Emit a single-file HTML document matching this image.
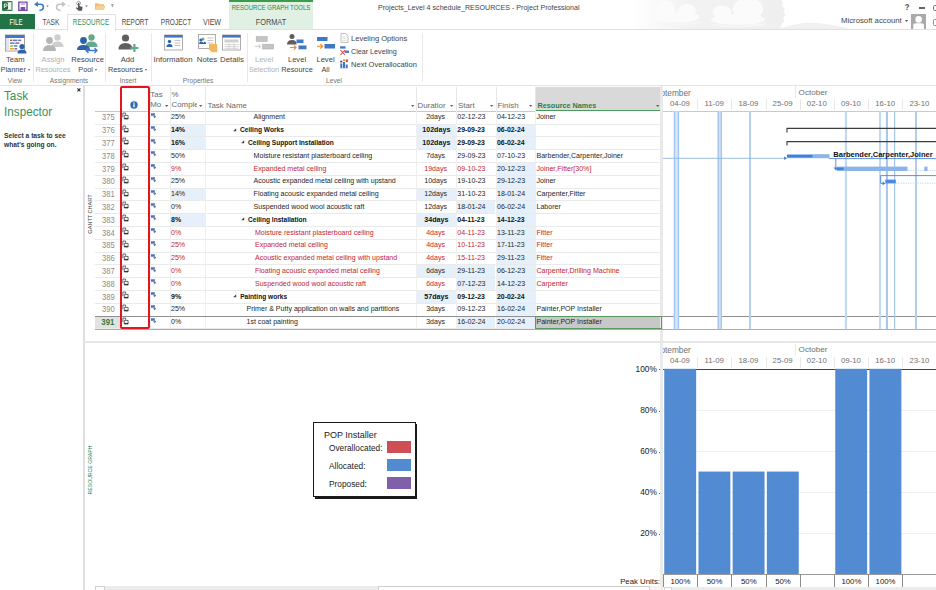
<!DOCTYPE html>
<html><head><meta charset="utf-8"><title>Project Professional</title>
<style>
html,body{margin:0;padding:0;background:#fff;}
html{overflow:hidden;width:936px;height:590px;}
body{width:936px;height:590px;position:relative;overflow:hidden;font-family:"Liberation Sans", sans-serif;}
div,span{box-sizing:border-box;}
svg{position:absolute;overflow:visible;}
</style></head><body>
<svg style="left:620px;top:0;" width="316" height="29.5" viewBox="620 0 316 29.5">
<defs><linearGradient id="cg" x1="0" x2="1" y1="0" y2="0"><stop offset="0" stop-color="#ffffff"/><stop offset="0.38" stop-color="#f2f2f2"/><stop offset="1" stop-color="#efefef"/></linearGradient></defs>
<path d="M630 0H781Q784 3 782 6Q787 9 783 12Q788 15 783 18Q786 22 781 24Q783 27 779 29.5H630Z" fill="url(#cg)"/>
<path d="M779 29.5Q800 20 825 24Q840 26 852 29.5Z" fill="#f0f0f0"/>
<g fill="#fbfbfb">
<ellipse cx="665" cy="9" rx="10" ry="8.5"/><ellipse cx="687" cy="10.5" rx="9" ry="6.5"/><ellipse cx="677" cy="17" rx="22.5" ry="5.5"/>
<ellipse cx="722" cy="12" rx="9.5" ry="6.5"/><ellipse cx="748" cy="9" rx="15" ry="11"/><ellipse cx="738" cy="19.5" rx="27" ry="5.5"/>
</g>
<path d="M655 23Q677 27 700 22M712 25Q738 29 766 24" stroke="#f6f6f6" stroke-width="2" fill="none"/>
</svg>
<div style="position:absolute;left:229.00px;top:0.00px;width:84.00px;height:29.30px;background:#e0f0e3;"></div>
<div style="position:absolute;left:229.00px;top:0.00px;width:84.00px;height:2.00px;background:#3c9c4a;"></div>
<div style="position:absolute;top:1.80px;height:12px;line-height:12px;font-size:7.0px;color:#2a8a43;font-weight:400;white-space:nowrap;left:171.10px;width:200px;text-align:center;transform:scaleX(0.855);transform-origin:center center;">RESOURCE GRAPH TOOLS</div>
<div style="position:absolute;top:16.40px;height:12px;line-height:12px;font-size:8.4px;color:#4a4a4a;font-weight:400;white-space:nowrap;left:171.00px;width:200px;text-align:center;transform:scaleX(0.875);transform-origin:center center;">FORMAT</div>
<svg style="left:0;top:0" width="120" height="14" viewBox="0 0 120 14">
<!-- project icon -->
<rect x="2" y="1" width="10.5" height="10" rx="1" fill="#2e7d46"/>
<rect x="7.2" y="2.2" width="4.3" height="7.6" fill="#e9f4ec"/>
<rect x="3" y="3" width="5" height="6" fill="#1f6a38"/>
<path d="M4.3 8 V4 H6 Q7.2 4 7.2 5.2 Q7.2 6.3 6 6.3 H4.6" stroke="#fff" stroke-width="0.9" fill="none"/>
<!-- save -->
<rect x="18.8" y="2.2" width="8.2" height="8.2" fill="#fff" stroke="#7a4fa3" stroke-width="1.4"/>
<rect x="20.6" y="7" width="4.6" height="3" fill="#7a4fa3"/>
<rect x="20.7" y="2.5" width="4.4" height="2.4" fill="#c8b4dd"/>
<!-- undo -->
<path d="M36.5 4.2 H40.5 Q43.4 4.2 43.4 7 Q43.4 10.2 39.5 10.4" stroke="#3f78c9" stroke-width="1.6" fill="none"/>
<path d="M34 4.3 L38 1.6 V7 Z" fill="#3f78c9"/>
<path d="M46.3 5.4 h2.4 l-1.2 1.5z" fill="#666"/>
<!-- redo -->
<path d="M63 4.2 H59.5 Q56.6 4.2 56.6 7 Q56.6 10.2 60.5 10.4" stroke="#c4c4c4" stroke-width="1.6" fill="none"/>
<path d="M66 4.3 L62 1.6 V7 Z" fill="#c4c4c4"/>
<path d="M67.6 5.4 h2.2 l-1.1 1.4z" fill="#bbb"/>
<!-- touch -->
<circle cx="78.6" cy="3.3" r="1.9" fill="none" stroke="#6d8bb5" stroke-width="0.8"/>
<path d="M78 3 V8 L76 7.2 L76.2 8.6 L78.6 10.8 H82 L82.6 7 L79.4 6 V3 Z" fill="#555"/>
<path d="M85.3 5.4 h2.4 l-1.2 1.5z" fill="#555"/>
<!-- folder -->
<path d="M95 3.2 H98.5 L99.5 4.3 H104 V10 H95 Z" fill="#f0bd76"/>
<path d="M96.6 5.8 H105.6 L104 10 H95 Z" fill="#f5cf98"/>
<path d="M111.2 5.6 h2.4 l-1.2 1.5z" fill="#777"/>
<rect x="111.2" y="4" width="2.4" height="0.7" fill="#777"/>
</svg>
<div style="position:absolute;top:2.10px;height:12px;line-height:12px;font-size:7.12px;color:#444;font-weight:400;white-space:nowrap;left:378.00px;">Projects_Level 4 schedule_RESOURCES - Project Professional</div>
<div style="position:absolute;top:0.80px;height:12px;line-height:12px;font-size:8.6px;color:#4a4a4a;font-weight:700;white-space:nowrap;left:806.90px;width:200px;text-align:center;transform:scaleX(0.9);transform-origin:center center;">?</div>
<div style="position:absolute;left:918.90px;top:6.90px;width:6.30px;height:1.70px;background:#646464;"></div>
<div style="position:absolute;left:933.30px;top:4.60px;width:6.00px;height:6.20px;background:transparent;border:1.2px solid #707070;border-radius:1.6px;"></div>
<div style="position:absolute;top:15.40px;height:12px;line-height:12px;font-size:7.75px;color:#444;font-weight:400;white-space:nowrap;left:841.00px;">Microsoft account</div>
<svg style="left:904.6px;top:20.4px" width="4" height="3"><path d="M0 0h3.2l-1.6 2z" fill="#555"/></svg>
<div style="position:absolute;left:910.80px;top:14.00px;width:15.30px;height:15.40px;background:#a9a9a9;"></div>
<svg style="left:910.8px;top:14px" width="15.3" height="15.4" viewBox="0 0 15.3 15.4">
<circle cx="7.6" cy="5.4" r="3.3" fill="#fff"/><path d="M2.2 15.4V11.6Q2.2 9.2 5.2 9.2H10Q13 9.2 13 11.6V15.4Z" fill="#fff"/></svg>
<div style="position:absolute;left:933.30px;top:19.40px;width:6.00px;height:6.60px;background:transparent;border:1.2px solid #8a8a8a;border-radius:1.6px;"></div>
<div style="position:absolute;left:0.00px;top:14.20px;width:35.40px;height:15.50px;background:#227447;"></div>
<div style="position:absolute;top:16.10px;height:12px;line-height:12px;font-size:8.4px;color:#fff;font-weight:400;white-space:nowrap;left:-83.70px;width:200px;text-align:center;transform:scaleX(0.733);transform-origin:center center;">FILE</div>
<div style="position:absolute;top:16.10px;height:12px;line-height:12px;font-size:8.4px;color:#4a4a4a;font-weight:400;white-space:nowrap;left:-48.60px;width:200px;text-align:center;transform:scaleX(0.788);transform-origin:center center;">TASK</div>
<div style="position:absolute;left:67.00px;top:14.00px;width:48.50px;height:16.50px;background:#fff;border:1px solid #e2e2e2;border-bottom:none;"></div>
<div style="position:absolute;top:16.10px;height:12px;line-height:12px;font-size:8.4px;color:#3a9055;font-weight:400;white-space:nowrap;left:-9.20px;width:200px;text-align:center;transform:scaleX(0.765);transform-origin:center center;">RESOURCE</div>
<div style="position:absolute;top:16.10px;height:12px;line-height:12px;font-size:8.4px;color:#4a4a4a;font-weight:400;white-space:nowrap;left:35.00px;width:200px;text-align:center;transform:scaleX(0.766);transform-origin:center center;">REPORT</div>
<div style="position:absolute;top:16.10px;height:12px;line-height:12px;font-size:8.4px;color:#4a4a4a;font-weight:400;white-space:nowrap;left:76.00px;width:200px;text-align:center;transform:scaleX(0.778);transform-origin:center center;">PROJECT</div>
<div style="position:absolute;top:16.10px;height:12px;line-height:12px;font-size:8.4px;color:#4a4a4a;font-weight:400;white-space:nowrap;left:112.10px;width:200px;text-align:center;transform:scaleX(0.848);transform-origin:center center;">VIEW</div>
<div style="position:absolute;left:0.00px;top:29.30px;width:67.00px;height:1.00px;background:#e0e0e0;"></div>
<div style="position:absolute;left:115.50px;top:29.30px;width:821.00px;height:1.00px;background:#e0e0e0;"></div>
<div style="position:absolute;left:0.00px;top:84.60px;width:936.00px;height:1.00px;background:#e4e4e4;"></div>
<div style="position:absolute;top:54.20px;height:12px;line-height:12px;font-size:7.6px;color:#444;font-weight:400;white-space:nowrap;left:-84.80px;width:200px;text-align:center;">Team</div>
<div style="position:absolute;top:63.70px;height:12px;line-height:12px;font-size:7.35px;color:#444;font-weight:400;white-space:nowrap;left:-84.80px;width:200px;text-align:center;">Planner<span style="display:inline-block;width:0;height:0;border-left:1.5px solid transparent;border-right:1.5px solid transparent;border-top:2px solid #666;margin-left:2px;vertical-align:1px"></span></div>
<div style="position:absolute;top:75.20px;height:12px;line-height:12px;font-size:6.7px;color:#777;font-weight:400;white-space:nowrap;left:-85.00px;width:200px;text-align:center;">View</div>
<div style="position:absolute;left:33.00px;top:33.00px;width:1.00px;height:49.00px;background:#e9e9e9;"></div>
<div style="position:absolute;top:54.20px;height:12px;line-height:12px;font-size:7.6px;color:#b0b0b0;font-weight:400;white-space:nowrap;left:-47.00px;width:200px;text-align:center;">Assign</div>
<div style="position:absolute;top:63.70px;height:12px;line-height:12px;font-size:7.35px;color:#b0b0b0;font-weight:400;white-space:nowrap;left:-47.00px;width:200px;text-align:center;">Resources</div>
<div style="position:absolute;top:54.20px;height:12px;line-height:12px;font-size:7.6px;color:#444;font-weight:400;white-space:nowrap;left:-12.40px;width:200px;text-align:center;">Resource</div>
<div style="position:absolute;top:63.70px;height:12px;line-height:12px;font-size:7.35px;color:#444;font-weight:400;white-space:nowrap;left:-12.40px;width:200px;text-align:center;">Pool<span style="display:inline-block;width:0;height:0;border-left:1.5px solid transparent;border-right:1.5px solid transparent;border-top:2px solid #666;margin-left:2px;vertical-align:1px"></span></div>
<div style="position:absolute;top:75.20px;height:12px;line-height:12px;font-size:6.7px;color:#777;font-weight:400;white-space:nowrap;left:-31.00px;width:200px;text-align:center;">Assignments</div>
<div style="position:absolute;left:104.70px;top:33.00px;width:1.00px;height:49.00px;background:#e9e9e9;"></div>
<div style="position:absolute;top:54.20px;height:12px;line-height:12px;font-size:7.6px;color:#444;font-weight:400;white-space:nowrap;left:27.50px;width:200px;text-align:center;">Add</div>
<div style="position:absolute;top:63.70px;height:12px;line-height:12px;font-size:7.35px;color:#444;font-weight:400;white-space:nowrap;left:27.50px;width:200px;text-align:center;">Resources<span style="display:inline-block;width:0;height:0;border-left:1.5px solid transparent;border-right:1.5px solid transparent;border-top:2px solid #666;margin-left:2px;vertical-align:1px"></span></div>
<div style="position:absolute;top:75.20px;height:12px;line-height:12px;font-size:6.7px;color:#777;font-weight:400;white-space:nowrap;left:28.00px;width:200px;text-align:center;">Insert</div>
<div style="position:absolute;left:150.50px;top:33.00px;width:1.00px;height:49.00px;background:#e9e9e9;"></div>
<div style="position:absolute;top:54.20px;height:12px;line-height:12px;font-size:7.8px;color:#444;font-weight:400;white-space:nowrap;left:73.00px;width:200px;text-align:center;">Information</div>
<div style="position:absolute;top:54.20px;height:12px;line-height:12px;font-size:7.8px;color:#444;font-weight:400;white-space:nowrap;left:107.00px;width:200px;text-align:center;">Notes</div>
<div style="position:absolute;top:54.20px;height:12px;line-height:12px;font-size:7.8px;color:#444;font-weight:400;white-space:nowrap;left:132.00px;width:200px;text-align:center;">Details</div>
<div style="position:absolute;top:75.20px;height:12px;line-height:12px;font-size:6.7px;color:#777;font-weight:400;white-space:nowrap;left:98.00px;width:200px;text-align:center;">Properties</div>
<div style="position:absolute;left:246.50px;top:33.00px;width:1.00px;height:49.00px;background:#e9e9e9;"></div>
<div style="position:absolute;top:54.20px;height:12px;line-height:12px;font-size:7.6px;color:#b0b0b0;font-weight:400;white-space:nowrap;left:164.00px;width:200px;text-align:center;">Level</div>
<div style="position:absolute;top:63.70px;height:12px;line-height:12px;font-size:7.35px;color:#b0b0b0;font-weight:400;white-space:nowrap;left:164.00px;width:200px;text-align:center;">Selection</div>
<div style="position:absolute;top:54.20px;height:12px;line-height:12px;font-size:7.6px;color:#444;font-weight:400;white-space:nowrap;left:197.00px;width:200px;text-align:center;">Level</div>
<div style="position:absolute;top:63.70px;height:12px;line-height:12px;font-size:7.35px;color:#444;font-weight:400;white-space:nowrap;left:197.00px;width:200px;text-align:center;">Resource</div>
<div style="position:absolute;top:54.20px;height:12px;line-height:12px;font-size:7.6px;color:#444;font-weight:400;white-space:nowrap;left:225.50px;width:200px;text-align:center;">Level</div>
<div style="position:absolute;top:63.70px;height:12px;line-height:12px;font-size:7.35px;color:#444;font-weight:400;white-space:nowrap;left:225.50px;width:200px;text-align:center;">All</div>
<div style="position:absolute;top:32.50px;height:12px;line-height:12px;font-size:7.55px;color:#444;font-weight:400;white-space:nowrap;left:351.00px;">Leveling Options</div>
<div style="position:absolute;top:45.90px;height:12px;line-height:12px;font-size:7.55px;color:#444;font-weight:400;white-space:nowrap;left:351.00px;transform:scaleX(0.95);transform-origin:left center;">Clear Leveling</div>
<div style="position:absolute;top:59.10px;height:12px;line-height:12px;font-size:7.55px;color:#444;font-weight:400;white-space:nowrap;left:351.00px;">Next Overallocation</div>
<div style="position:absolute;top:75.20px;height:12px;line-height:12px;font-size:6.7px;color:#777;font-weight:400;white-space:nowrap;left:234.00px;width:200px;text-align:center;">Level</div>
<div style="position:absolute;left:421.50px;top:33.00px;width:1.00px;height:49.00px;background:#e9e9e9;"></div>
<svg style="left:0;top:30px" width="430" height="40" viewBox="0 30 430 40">
<!-- Team planner -->
<rect x="5.5" y="35" width="19" height="16" fill="#fff" stroke="#8a8a8a" stroke-width="0.8"/>
<rect x="5.5" y="35" width="19" height="3" fill="#3f78c9"/>
<rect x="5.9" y="38" width="3.2" height="12.6" fill="#dfe3ea"/>
<rect x="10" y="39.6" width="2.4" height="1.5" fill="#c0504d"/><rect x="13" y="39.6" width="4.4" height="1.5" fill="#4f81bd"/><rect x="18.2" y="39.6" width="3" height="1.5" fill="#8064a2"/>
<rect x="10" y="42.4" width="4.5" height="1.5" fill="#4f81bd"/><rect x="15.3" y="42.4" width="4" height="1.5" fill="#8064a2"/>
<rect x="10" y="45.2" width="3.4" height="1.5" fill="#9bbb59"/><rect x="14" y="45.2" width="3.4" height="1.5" fill="#4f81bd"/>
<rect x="10" y="48" width="4" height="1.5" fill="#f0a030"/><rect x="14.6" y="48" width="2.6" height="1.5" fill="#8064a2"/>
<circle cx="22" cy="46.5" r="2.6" fill="#2d63ad"/><path d="M17.5 53.5 Q17.5 49.5 22 49.5 Q26.5 49.5 26.5 53.5 Z" fill="#2d63ad"/>
<!-- Assign resources (gray) -->
<circle cx="57.5" cy="37.5" r="3.2" fill="#cfcfcf"/><path d="M51.5 47 Q51.5 41.5 57.5 41.5 Q63.5 41.5 63.5 47 Z" fill="#cfcfcf"/>
<circle cx="49.5" cy="40.5" r="3.4" fill="#b5b5b5"/><path d="M43 51 Q43 45 49.5 45 Q56 45 56 51 Z" fill="#b5b5b5"/>
<!-- Resource pool -->
<circle cx="91.5" cy="37.5" r="3.2" fill="#6aa88c"/><path d="M85.5 47 Q85.5 41.5 91.5 41.5 Q97.5 41.5 97.5 47 Z" fill="#6aa88c"/>
<circle cx="83.5" cy="40.5" r="3.4" fill="#2d63ad"/><path d="M77 50 Q77 45 83.5 45 Q90 45 90 50 Z" fill="#2d63ad"/>
<path d="M86 50.5 H97 M88.5 48 L86 50.5 L88.5 53 M94.5 48 L97 50.5 L94.5 53" stroke="#3f78c9" stroke-width="1.3" fill="none"/>
<!-- Add resources -->
<circle cx="125.5" cy="38" r="3.6" fill="#5f5f5f"/><path d="M118.5 49.5 Q118.5 43 125.5 43 Q132.5 43 132.5 49.5 Z" fill="#5f5f5f"/>
<path d="M134.4 44 V52 M130.4 48 H138.4" stroke="#5aad8a" stroke-width="2.2"/>
<!-- Information -->
<rect x="164.5" y="35" width="18" height="15" fill="#fff" stroke="#9a9a9a" stroke-width="0.8"/>
<rect x="164.5" y="35" width="18" height="2.6" fill="#3f78c9"/>
<circle cx="169.5" cy="41.5" r="1.7" fill="#2d63ad"/><path d="M166.5 47 Q166.5 44 169.5 44 Q172.5 44 172.5 47 Z" fill="#2d63ad"/>
<path d="M174.5 40.5 H180.5 M174.5 43 H180.5 M174.5 45.5 H180.5" stroke="#bdbdbd" stroke-width="0.9"/>
<!-- Notes -->
<rect x="198.5" y="34.5" width="17" height="14" fill="#fff" stroke="#9a9a9a" stroke-width="0.8"/>
<circle cx="203" cy="39" r="1.5" fill="#6aa88c"/><circle cx="200.8" cy="40" r="1.5" fill="#2d63ad"/>
<path d="M199 44 Q199 41.7 201 41.7 Q203 41.7 203.5 43 Q204.5 41 206 42.5 V44 Z" fill="#2d63ad"/>
<path d="M207.5 38 H213.5 M207.5 40.5 H213.5 M207.5 43 H213.5" stroke="#bdbdbd" stroke-width="0.9"/>
<rect x="209" y="44" width="8.2" height="8.2" fill="#f0b860"/>
<path d="M209 49.5 L211.8 52.2 H209 Z" fill="#fff"/>
<!-- Details -->
<rect x="222.5" y="35" width="18" height="15" fill="#fff" stroke="#9a9a9a" stroke-width="0.8"/>
<rect x="222.5" y="35" width="18" height="2.6" fill="#3f78c9"/>
<rect x="224.5" y="39.5" width="14" height="3" fill="#d0d0d0"/>
<path d="M224.5 44.5 H238.5 M224.5 46.5 H238.5 M224.5 48.3 H238.5 M229 43.5 V49 M234 43.5 V49" stroke="#c4c4c4" stroke-width="0.7"/>
<!-- Level selection (gray) -->
<rect x="256.2" y="36.6" width="11" height="4.8" fill="#c4c4c4" stroke="#b0b0b0" stroke-width="0.6"/>
<rect x="262.6" y="44.2" width="11" height="4.8" fill="#c4c4c4" stroke="#b0b0b0" stroke-width="0.6"/>
<path d="M255 46.3 H260.5 M258.5 44.3 L260.7 46.3 L258.5 48.3" stroke="#c9c9c9" stroke-width="1" fill="none"/>
<!-- Level resource -->
<circle cx="292" cy="36.6" r="2.5" fill="#5f5f5f"/><path d="M287 44.5 Q287 40 292 40 Q297 40 296.5 44.5 Z" fill="#5f5f5f"/>
<rect x="296.5" y="39.5" width="7" height="3.6" fill="#3f78c9"/>
<rect x="298.5" y="45.5" width="8" height="3.8" fill="#3f78c9"/>
<path d="M290 47.5 H296 M293.8 45.3 L296.2 47.5 L293.8 49.7" stroke="#f08a24" stroke-width="1.1" fill="none"/>
<!-- Level all -->
<rect x="317" y="37" width="10.5" height="4" fill="#3f78c9"/>
<rect x="324.5" y="44" width="10.5" height="4.5" fill="#3f78c9"/>
<path d="M317 46.3 H322.5 M320.3 44.1 L322.7 46.3 L320.3 48.5" stroke="#f08a24" stroke-width="1.1" fill="none"/>
<!-- Leveling options -->
<path d="M341 33.5 H345.5 L348 36 V42.5 H341 Z" fill="#fff" stroke="#a6a6a6" stroke-width="0.7"/>
<path d="M342.3 37 H346.5 M342.3 38.8 H346.5 M342.3 40.6 H346.5" stroke="#cfcfcf" stroke-width="0.6"/>
<!-- Clear leveling -->
<rect x="340" y="46.3" width="5.5" height="2.3" fill="#3f78c9"/><rect x="344.5" y="50.6" width="4.5" height="2.3" fill="#3f78c9"/>
<path d="M340.5 50 L345 55 M345 50 L340.5 55" stroke="#e0463b" stroke-width="1.1"/>
<!-- Next overallocation -->
<rect x="340.3" y="63.5" width="2" height="4.8" fill="#3f78c9"/><rect x="343" y="62" width="2" height="6.3" fill="#3f78c9"/><rect x="345.7" y="64.5" width="2" height="3.8" fill="#3f78c9"/>
<rect x="340.3" y="60.7" width="2" height="1.8" fill="#444"/><rect x="345.7" y="59.5" width="2.2" height="2.6" fill="#e0463b"/><rect x="343" y="59.3" width="2" height="1.6" fill="#f08a24"/>
</svg>
<div style="position:absolute;top:89.50px;height:12px;line-height:12px;font-size:12.5px;color:#3a9055;font-weight:400;white-space:nowrap;height:20px;line-height:20px;margin-top:-4px;left:4.40px;transform:scaleX(0.938);transform-origin:left center;">Task</div>
<div style="position:absolute;top:105.70px;height:12px;line-height:12px;font-size:12.5px;color:#3a9055;font-weight:400;white-space:nowrap;height:20px;line-height:20px;margin-top:-4px;left:4.40px;transform:scaleX(0.938);transform-origin:left center;">Inspector</div>
<div style="position:absolute;top:130.20px;height:12px;line-height:12px;font-size:6.7px;color:#333;font-weight:700;white-space:nowrap;left:4.00px;">Select a task to see</div>
<div style="position:absolute;top:139.20px;height:12px;line-height:12px;font-size:6.7px;color:#333;font-weight:700;white-space:nowrap;left:4.00px;">what's going on.</div>
<svg style="left:76.8px;top:88.2px" width="5" height="5"><path d="M0.4 0.4L3.4 3.4M3.4 0.4L0.4 3.4" stroke="#3a3a3a" stroke-width="1.1"/></svg>
<div style="position:absolute;left:83.10px;top:85.00px;width:1.50px;height:505.00px;background:#dedede;"></div>
<div style="position:absolute;left:39.6px;top:208.6px;width:100px;height:10px;line-height:10px;text-align:center;font-size:5.55px;color:#454545;transform:rotate(-90deg);white-space:nowrap;">GANTT CHART</div>
<div style="position:absolute;left:39.7px;top:465px;width:100px;height:10px;line-height:10px;text-align:center;font-size:5.15px;color:#1f7a3f;transform:rotate(-90deg);white-space:nowrap;">RESOURCE GRAPH</div>
<div style="position:absolute;left:535.00px;top:86.50px;width:126.00px;height:24.80px;background:#d9d9d9;"></div>
<div style="position:absolute;left:535.00px;top:109.60px;width:126.00px;height:1.70px;background:#4a9c5b;"></div>
<div style="position:absolute;left:94.80px;top:110.60px;width:440.20px;height:1.00px;background:#c8c8c8;"></div>
<div style="position:absolute;left:149.50px;top:87.00px;width:1.00px;height:24.00px;background:#e6e6e6;"></div>
<div style="position:absolute;left:169.50px;top:87.00px;width:1.00px;height:24.00px;background:#e6e6e6;"></div>
<div style="position:absolute;left:205.30px;top:87.00px;width:1.00px;height:24.00px;background:#e6e6e6;"></div>
<div style="position:absolute;left:415.50px;top:87.00px;width:1.00px;height:24.00px;background:#e6e6e6;"></div>
<div style="position:absolute;left:455.80px;top:87.00px;width:1.00px;height:24.00px;background:#e6e6e6;"></div>
<div style="position:absolute;left:495.50px;top:87.00px;width:1.00px;height:24.00px;background:#e6e6e6;"></div>
<div style="position:absolute;left:535.00px;top:87.00px;width:1.00px;height:24.00px;background:#e6e6e6;"></div>
<div style="position:absolute;top:89.20px;height:12px;line-height:12px;font-size:7.9px;color:#6a6a6a;font-weight:400;white-space:nowrap;left:150.30px;">Tas</div>
<div style="position:absolute;top:99.20px;height:12px;line-height:12px;font-size:7.9px;color:#6a6a6a;font-weight:400;white-space:nowrap;left:150.30px;">Mo</div>
<div style="position:absolute;left:163.50px;top:90.00px;width:6.00px;height:21.00px;background:#fff;"></div>
<div style="position:absolute;top:89.20px;height:12px;line-height:12px;font-size:7.9px;color:#6a6a6a;font-weight:400;white-space:nowrap;left:171.50px;">%</div>
<div style="position:absolute;top:99.20px;height:12px;line-height:12px;font-size:7.9px;color:#6a6a6a;font-weight:400;white-space:nowrap;left:171.50px;">Comple</div>
<div style="position:absolute;left:197.20px;top:99.00px;width:8.00px;height:12.00px;background:#fff;"></div>
<div style="position:absolute;top:99.90px;height:12px;line-height:12px;font-size:7.9px;color:#6a6a6a;font-weight:400;white-space:nowrap;left:207.50px;">Task Name</div>
<div style="position:absolute;top:99.90px;height:12px;line-height:12px;font-size:7.9px;color:#6a6a6a;font-weight:400;white-space:nowrap;left:417.50px;">Duratior</div>
<div style="position:absolute;left:448.00px;top:99.00px;width:7.50px;height:11.50px;background:#fff;"></div>
<div style="position:absolute;top:99.90px;height:12px;line-height:12px;font-size:7.9px;color:#6a6a6a;font-weight:400;white-space:nowrap;left:458.00px;">Start</div>
<div style="position:absolute;top:99.90px;height:12px;line-height:12px;font-size:7.9px;color:#6a6a6a;font-weight:400;white-space:nowrap;left:497.50px;">Finish</div>
<div style="position:absolute;top:99.90px;height:12px;line-height:12px;font-size:7.25px;color:#2f7d45;font-weight:700;white-space:nowrap;left:537.50px;">Resource Names</div>
<svg style="left:164.5px;top:105.2px" width="4" height="3"><path d="M0 0h3.4l-1.7 2.1z" fill="#666"/></svg>
<svg style="left:198.5px;top:105.2px" width="4" height="3"><path d="M0 0h3.4l-1.7 2.1z" fill="#666"/></svg>
<svg style="left:410.5px;top:105.2px" width="4" height="3"><path d="M0 0h3.4l-1.7 2.1z" fill="#666"/></svg>
<svg style="left:449.5px;top:105.2px" width="4" height="3"><path d="M0 0h3.4l-1.7 2.1z" fill="#666"/></svg>
<svg style="left:489.5px;top:105.2px" width="4" height="3"><path d="M0 0h3.4l-1.7 2.1z" fill="#666"/></svg>
<svg style="left:529px;top:105.2px" width="4" height="3"><path d="M0 0h3.4l-1.7 2.1z" fill="#666"/></svg>
<svg style="left:655.5px;top:105.2px" width="4" height="3"><path d="M0 0h3.4l-1.7 2.1z" fill="#2f7d45"/></svg>
<svg style="left:130.3px;top:100.7px" width="8" height="8" viewBox="0 0 8 8"><circle cx="4" cy="4" r="3.7" fill="#2f6db5"/><rect x="3.3" y="3.3" width="1.4" height="2.9" fill="#fff"/><rect x="3.3" y="1.5" width="1.4" height="1.2" fill="#fff"/></svg>
<div style="position:absolute;left:170.50px;top:124.15px;width:34.80px;height:12.30px;background:#e6f0fb;"></div>
<div style="position:absolute;left:416.50px;top:124.15px;width:39.30px;height:12.30px;background:#e6f0fb;"></div>
<div style="position:absolute;left:496.50px;top:124.15px;width:38.50px;height:12.30px;background:#e6f0fb;"></div>
<div style="position:absolute;left:170.50px;top:136.95px;width:34.80px;height:12.30px;background:#e6f0fb;"></div>
<div style="position:absolute;left:416.50px;top:136.95px;width:39.30px;height:12.30px;background:#e6f0fb;"></div>
<div style="position:absolute;left:496.50px;top:136.95px;width:38.50px;height:12.30px;background:#e6f0fb;"></div>
<div style="position:absolute;left:496.50px;top:162.55px;width:38.50px;height:12.30px;background:#e6f0fb;"></div>
<div style="position:absolute;left:496.50px;top:175.35px;width:38.50px;height:12.30px;background:#e6f0fb;"></div>
<div style="position:absolute;left:170.50px;top:188.15px;width:34.80px;height:12.30px;background:#e6f0fb;"></div>
<div style="position:absolute;left:416.50px;top:188.15px;width:39.30px;height:12.30px;background:#e6f0fb;"></div>
<div style="position:absolute;left:496.50px;top:188.15px;width:38.50px;height:12.30px;background:#e6f0fb;"></div>
<div style="position:absolute;left:456.80px;top:200.95px;width:38.70px;height:12.30px;background:#e6f0fb;"></div>
<div style="position:absolute;left:496.50px;top:200.95px;width:38.50px;height:12.30px;background:#e6f0fb;"></div>
<div style="position:absolute;left:170.50px;top:213.75px;width:34.80px;height:12.30px;background:#e6f0fb;"></div>
<div style="position:absolute;left:416.50px;top:213.75px;width:39.30px;height:12.30px;background:#e6f0fb;"></div>
<div style="position:absolute;left:496.50px;top:213.75px;width:38.50px;height:12.30px;background:#e6f0fb;"></div>
<div style="position:absolute;left:496.50px;top:226.55px;width:38.50px;height:12.30px;background:#e6f0fb;"></div>
<div style="position:absolute;left:496.50px;top:239.35px;width:38.50px;height:12.30px;background:#e6f0fb;"></div>
<div style="position:absolute;left:496.50px;top:252.15px;width:38.50px;height:12.30px;background:#e6f0fb;"></div>
<div style="position:absolute;left:416.50px;top:264.95px;width:39.30px;height:12.30px;background:#e6f0fb;"></div>
<div style="position:absolute;left:456.80px;top:264.95px;width:38.70px;height:12.30px;background:#e6f0fb;"></div>
<div style="position:absolute;left:496.50px;top:264.95px;width:38.50px;height:12.30px;background:#e6f0fb;"></div>
<div style="position:absolute;left:456.80px;top:277.75px;width:38.70px;height:12.30px;background:#e6f0fb;"></div>
<div style="position:absolute;left:496.50px;top:277.75px;width:38.50px;height:12.30px;background:#e6f0fb;"></div>
<div style="position:absolute;left:416.50px;top:290.55px;width:39.30px;height:12.30px;background:#e6f0fb;"></div>
<div style="position:absolute;left:496.50px;top:290.55px;width:38.50px;height:12.30px;background:#e6f0fb;"></div>
<div style="position:absolute;left:496.50px;top:303.35px;width:38.50px;height:12.30px;background:#e6f0fb;"></div>
<div style="position:absolute;left:456.80px;top:316.15px;width:38.70px;height:12.30px;background:#e6f0fb;"></div>
<div style="position:absolute;left:496.50px;top:316.15px;width:38.50px;height:12.30px;background:#e6f0fb;"></div>
<div style="position:absolute;left:94.80px;top:315.65px;width:25.60px;height:12.80px;background:#e2e2e2;"></div>
<div style="position:absolute;left:535.00px;top:315.95px;width:126.50px;height:13.00px;background:#c8c8c8;border:1px solid #5a9a62;"></div>
<div style="position:absolute;left:94.80px;top:123.65px;width:566.20px;height:1.00px;background:#eaeaea;"></div>
<div style="position:absolute;left:94.80px;top:136.45px;width:566.20px;height:1.00px;background:#eaeaea;"></div>
<div style="position:absolute;left:94.80px;top:149.25px;width:566.20px;height:1.00px;background:#eaeaea;"></div>
<div style="position:absolute;left:94.80px;top:162.05px;width:566.20px;height:1.00px;background:#eaeaea;"></div>
<div style="position:absolute;left:94.80px;top:174.85px;width:566.20px;height:1.00px;background:#eaeaea;"></div>
<div style="position:absolute;left:94.80px;top:187.65px;width:566.20px;height:1.00px;background:#eaeaea;"></div>
<div style="position:absolute;left:94.80px;top:200.45px;width:566.20px;height:1.00px;background:#eaeaea;"></div>
<div style="position:absolute;left:94.80px;top:213.25px;width:566.20px;height:1.00px;background:#eaeaea;"></div>
<div style="position:absolute;left:94.80px;top:226.05px;width:566.20px;height:1.00px;background:#eaeaea;"></div>
<div style="position:absolute;left:94.80px;top:238.85px;width:566.20px;height:1.00px;background:#eaeaea;"></div>
<div style="position:absolute;left:94.80px;top:251.65px;width:566.20px;height:1.00px;background:#eaeaea;"></div>
<div style="position:absolute;left:94.80px;top:264.45px;width:566.20px;height:1.00px;background:#eaeaea;"></div>
<div style="position:absolute;left:94.80px;top:277.25px;width:566.20px;height:1.00px;background:#eaeaea;"></div>
<div style="position:absolute;left:94.80px;top:290.05px;width:566.20px;height:1.00px;background:#eaeaea;"></div>
<div style="position:absolute;left:94.80px;top:302.85px;width:566.20px;height:1.00px;background:#eaeaea;"></div>
<div style="position:absolute;left:94.80px;top:315.65px;width:566.20px;height:1.00px;background:#eaeaea;"></div>
<div style="position:absolute;left:94.80px;top:328.45px;width:566.20px;height:1.00px;background:#eaeaea;"></div>
<div style="position:absolute;left:120.30px;top:110.85px;width:1.00px;height:217.60px;background:#efefef;"></div>
<div style="position:absolute;left:149.50px;top:110.85px;width:1.00px;height:217.60px;background:#efefef;"></div>
<div style="position:absolute;left:169.50px;top:110.85px;width:1.00px;height:217.60px;background:#efefef;"></div>
<div style="position:absolute;left:205.30px;top:110.85px;width:1.00px;height:217.60px;background:#efefef;"></div>
<div style="position:absolute;left:415.50px;top:110.85px;width:1.00px;height:217.60px;background:#efefef;"></div>
<div style="position:absolute;left:455.80px;top:110.85px;width:1.00px;height:217.60px;background:#efefef;"></div>
<div style="position:absolute;left:495.50px;top:110.85px;width:1.00px;height:217.60px;background:#efefef;"></div>
<div style="position:absolute;left:535.00px;top:110.85px;width:1.00px;height:217.60px;background:#efefef;"></div>
<div style="position:absolute;left:660.40px;top:86.00px;width:2.80px;height:256.00px;background:#e9e9e9;"></div>
<div style="position:absolute;left:94.80px;top:315.85px;width:841.20px;height:1.00px;background:#909090;"></div>
<div style="position:absolute;left:94.80px;top:328.55px;width:841.20px;height:1.20px;background:#adadad;"></div>
<div style="position:absolute;left:535.00px;top:315.95px;width:126.50px;height:13.20px;background:transparent;border:1px solid #5a9a62;"></div>
<div style="position:absolute;top:111.30px;height:12px;line-height:12px;font-size:8.8px;color:#8a8a8a;font-weight:400;white-space:nowrap;right:821.70px;text-align:right;transform:scaleX(0.858);transform-origin:right center;">375</div>
<div style="position:absolute;top:111.30px;height:12px;line-height:12px;font-size:7.05px;color:#262626;font-weight:400;white-space:nowrap;left:171.00px;">25%</div>
<div style="position:absolute;top:111.30px;height:12px;line-height:12px;font-size:7.05px;color:#262626;font-weight:400;white-space:nowrap;left:253.60px;">Alignment</div>
<div style="position:absolute;top:111.30px;height:12px;line-height:12px;font-size:7.05px;color:#262626;font-weight:400;white-space:nowrap;left:335.60px;width:200px;text-align:center;">2days</div>
<div style="position:absolute;top:111.30px;height:12px;line-height:12px;font-size:7.05px;color:#262626;font-weight:400;white-space:nowrap;left:457.30px;">02-12-23</div>
<div style="position:absolute;top:111.30px;height:12px;line-height:12px;font-size:7.05px;color:#262626;font-weight:400;white-space:nowrap;left:497.00px;">04-12-23</div>
<div style="position:absolute;top:111.30px;height:12px;line-height:12px;font-size:7.05px;color:#262626;font-weight:400;white-space:nowrap;left:536.50px;">Joiner</div>
<svg style="left:121.9px;top:111.8px" width="8" height="9" viewBox="0 0 8 9"><path d="M0.9 1H3.6V2.8M0.9 1V5.2M2.3 3.4H6.1V7H2.3Z" fill="none" stroke="#3a3a3a" stroke-width="0.75"/><rect x="2.3" y="5.9" width="3.8" height="1.1" fill="#333"/></svg>
<svg style="left:150.8px;top:113.0px" width="6" height="6" viewBox="0 0 6 6"><path d="M0 0.2H4.1L3.4 2.8H0Z" fill="#3f78c9"/><path d="M2.2 3.6H4M3.4 2.4V4.9L4.9 3.6Z" stroke="#5a6f8f" stroke-width="0.6" fill="#5a6f8f"/></svg>
<div style="position:absolute;top:124.10px;height:12px;line-height:12px;font-size:8.8px;color:#8a8a8a;font-weight:400;white-space:nowrap;right:821.70px;text-align:right;transform:scaleX(0.858);transform-origin:right center;">376</div>
<div style="position:absolute;top:124.10px;height:12px;line-height:12px;font-size:7.05px;color:#111;font-weight:700;white-space:nowrap;left:171.00px;">14%</div>
<svg style="left:233.2px;top:127.6px" width="4" height="4"><path d="M3.2 0.2V3.2H0.2z" fill="#444"/></svg>
<div style="position:absolute;top:124.10px;height:12px;line-height:12px;font-size:6.6px;color:#111;font-weight:700;white-space:nowrap;left:240.00px;">Ceiling Works</div>
<div style="position:absolute;top:124.10px;height:12px;line-height:12px;font-size:7.15px;color:#111;font-weight:700;white-space:nowrap;left:336.30px;width:200px;text-align:center;">102days</div>
<div style="position:absolute;top:124.10px;height:12px;line-height:12px;font-size:6.9px;color:#111;font-weight:700;white-space:nowrap;left:457.30px;">29-09-23</div>
<div style="position:absolute;top:124.10px;height:12px;line-height:12px;font-size:6.9px;color:#111;font-weight:700;white-space:nowrap;left:497.00px;">06-02-24</div>
<div style="position:absolute;top:124.10px;height:12px;line-height:12px;font-size:7.05px;color:#262626;font-weight:400;white-space:nowrap;left:536.50px;"></div>
<svg style="left:121.9px;top:124.5px" width="8" height="9" viewBox="0 0 8 9"><path d="M0.9 1H3.6V2.8M0.9 1V5.2M2.3 3.4H6.1V7H2.3Z" fill="none" stroke="#3a3a3a" stroke-width="0.75"/><rect x="2.3" y="5.9" width="3.8" height="1.1" fill="#333"/></svg>
<svg style="left:150.8px;top:125.8px" width="6" height="6" viewBox="0 0 6 6"><path d="M0 0.2H4.1L3.4 2.8H0Z" fill="#3f78c9"/><path d="M2.2 3.6H4M3.4 2.4V4.9L4.9 3.6Z" stroke="#5a6f8f" stroke-width="0.6" fill="#5a6f8f"/></svg>
<div style="position:absolute;top:136.90px;height:12px;line-height:12px;font-size:8.8px;color:#8a8a8a;font-weight:400;white-space:nowrap;right:821.70px;text-align:right;transform:scaleX(0.858);transform-origin:right center;">377</div>
<div style="position:absolute;top:136.90px;height:12px;line-height:12px;font-size:7.05px;color:#111;font-weight:700;white-space:nowrap;left:171.00px;">16%</div>
<svg style="left:241.2px;top:140.4px" width="4" height="4"><path d="M3.2 0.2V3.2H0.2z" fill="#444"/></svg>
<div style="position:absolute;top:136.90px;height:12px;line-height:12px;font-size:6.6px;color:#111;font-weight:700;white-space:nowrap;left:248.00px;">Ceiling Support Installation</div>
<div style="position:absolute;top:136.90px;height:12px;line-height:12px;font-size:7.15px;color:#111;font-weight:700;white-space:nowrap;left:336.30px;width:200px;text-align:center;">102days</div>
<div style="position:absolute;top:136.90px;height:12px;line-height:12px;font-size:6.9px;color:#111;font-weight:700;white-space:nowrap;left:457.30px;">29-09-23</div>
<div style="position:absolute;top:136.90px;height:12px;line-height:12px;font-size:6.9px;color:#111;font-weight:700;white-space:nowrap;left:497.00px;">06-02-24</div>
<div style="position:absolute;top:136.90px;height:12px;line-height:12px;font-size:7.05px;color:#262626;font-weight:400;white-space:nowrap;left:536.50px;"></div>
<svg style="left:121.9px;top:137.3px" width="8" height="9" viewBox="0 0 8 9"><path d="M0.9 1H3.6V2.8M0.9 1V5.2M2.3 3.4H6.1V7H2.3Z" fill="none" stroke="#3a3a3a" stroke-width="0.75"/><rect x="2.3" y="5.9" width="3.8" height="1.1" fill="#333"/></svg>
<svg style="left:150.8px;top:138.5px" width="6" height="6" viewBox="0 0 6 6"><path d="M0 0.2H4.1L3.4 2.8H0Z" fill="#3f78c9"/><path d="M2.2 3.6H4M3.4 2.4V4.9L4.9 3.6Z" stroke="#5a6f8f" stroke-width="0.6" fill="#5a6f8f"/></svg>
<div style="position:absolute;top:149.70px;height:12px;line-height:12px;font-size:8.8px;color:#8a8a8a;font-weight:400;white-space:nowrap;right:821.70px;text-align:right;transform:scaleX(0.858);transform-origin:right center;">378</div>
<div style="position:absolute;top:149.70px;height:12px;line-height:12px;font-size:7.05px;color:#262626;font-weight:400;white-space:nowrap;left:171.00px;">50%</div>
<div style="position:absolute;top:149.70px;height:12px;line-height:12px;font-size:7.05px;color:#262626;font-weight:400;white-space:nowrap;left:253.60px;">Moisture resistant plasterboard ceiling</div>
<div style="position:absolute;top:149.70px;height:12px;line-height:12px;font-size:7.05px;color:#262626;font-weight:400;white-space:nowrap;left:335.60px;width:200px;text-align:center;">7days</div>
<div style="position:absolute;top:149.70px;height:12px;line-height:12px;font-size:7.05px;color:#262626;font-weight:400;white-space:nowrap;left:457.30px;">29-09-23</div>
<div style="position:absolute;top:149.70px;height:12px;line-height:12px;font-size:7.05px;color:#262626;font-weight:400;white-space:nowrap;left:497.00px;">07-10-23</div>
<div style="position:absolute;top:149.70px;height:12px;line-height:12px;font-size:7.05px;color:#262626;font-weight:400;white-space:nowrap;left:536.50px;">Barbender,Carpenter,Joiner</div>
<svg style="left:121.9px;top:150.2px" width="8" height="9" viewBox="0 0 8 9"><path d="M0.9 1H3.6V2.8M0.9 1V5.2M2.3 3.4H6.1V7H2.3Z" fill="none" stroke="#3a3a3a" stroke-width="0.75"/><rect x="2.3" y="5.9" width="3.8" height="1.1" fill="#333"/></svg>
<svg style="left:150.8px;top:151.3px" width="6" height="6" viewBox="0 0 6 6"><path d="M0 0.2H4.1L3.4 2.8H0Z" fill="#3f78c9"/><path d="M2.2 3.6H4M3.4 2.4V4.9L4.9 3.6Z" stroke="#5a6f8f" stroke-width="0.6" fill="#5a6f8f"/></svg>
<div style="position:absolute;top:162.50px;height:12px;line-height:12px;font-size:8.8px;color:#8a8a8a;font-weight:400;white-space:nowrap;right:821.70px;text-align:right;transform:scaleX(0.858);transform-origin:right center;">379</div>
<div style="position:absolute;top:162.50px;height:12px;line-height:12px;font-size:7.05px;color:#c5262d;font-weight:400;white-space:nowrap;left:171.00px;">9%</div>
<div style="position:absolute;top:162.50px;height:12px;line-height:12px;font-size:7.05px;color:#c5262d;font-weight:400;white-space:nowrap;left:253.60px;">Expanded metal ceiling</div>
<div style="position:absolute;top:162.50px;height:12px;line-height:12px;font-size:7.05px;color:#c5262d;font-weight:400;white-space:nowrap;left:335.60px;width:200px;text-align:center;">19days</div>
<div style="position:absolute;top:162.50px;height:12px;line-height:12px;font-size:7.05px;color:#c5262d;font-weight:400;white-space:nowrap;left:457.30px;">09-10-23</div>
<div style="position:absolute;top:162.50px;height:12px;line-height:12px;font-size:7.05px;color:#262626;font-weight:400;white-space:nowrap;left:497.00px;">20-12-23</div>
<div style="position:absolute;top:162.50px;height:12px;line-height:12px;font-size:7.05px;color:#c5262d;font-weight:400;white-space:nowrap;left:536.50px;">Joiner,Fitter[30%]</div>
<svg style="left:121.9px;top:163.0px" width="8" height="9" viewBox="0 0 8 9"><path d="M0.9 1H3.6V2.8M0.9 1V5.2M2.3 3.4H6.1V7H2.3Z" fill="none" stroke="#3a3a3a" stroke-width="0.75"/><rect x="2.3" y="5.9" width="3.8" height="1.1" fill="#333"/></svg>
<svg style="left:150.8px;top:164.2px" width="6" height="6" viewBox="0 0 6 6"><path d="M0 0.2H4.1L3.4 2.8H0Z" fill="#3f78c9"/><path d="M2.2 3.6H4M3.4 2.4V4.9L4.9 3.6Z" stroke="#5a6f8f" stroke-width="0.6" fill="#5a6f8f"/></svg>
<div style="position:absolute;top:175.30px;height:12px;line-height:12px;font-size:8.8px;color:#8a8a8a;font-weight:400;white-space:nowrap;right:821.70px;text-align:right;transform:scaleX(0.858);transform-origin:right center;">380</div>
<div style="position:absolute;top:175.30px;height:12px;line-height:12px;font-size:7.05px;color:#262626;font-weight:400;white-space:nowrap;left:171.00px;">25%</div>
<div style="position:absolute;top:175.30px;height:12px;line-height:12px;font-size:7.05px;color:#262626;font-weight:400;white-space:nowrap;left:253.60px;">Acoustic expanded metal ceiling with upstand</div>
<div style="position:absolute;top:175.30px;height:12px;line-height:12px;font-size:7.05px;color:#262626;font-weight:400;white-space:nowrap;left:335.60px;width:200px;text-align:center;">10days</div>
<div style="position:absolute;top:175.30px;height:12px;line-height:12px;font-size:7.05px;color:#262626;font-weight:400;white-space:nowrap;left:457.30px;">19-10-23</div>
<div style="position:absolute;top:175.30px;height:12px;line-height:12px;font-size:7.05px;color:#262626;font-weight:400;white-space:nowrap;left:497.00px;">29-12-23</div>
<div style="position:absolute;top:175.30px;height:12px;line-height:12px;font-size:7.05px;color:#262626;font-weight:400;white-space:nowrap;left:536.50px;">Joiner</div>
<svg style="left:121.9px;top:175.8px" width="8" height="9" viewBox="0 0 8 9"><path d="M0.9 1H3.6V2.8M0.9 1V5.2M2.3 3.4H6.1V7H2.3Z" fill="none" stroke="#3a3a3a" stroke-width="0.75"/><rect x="2.3" y="5.9" width="3.8" height="1.1" fill="#333"/></svg>
<svg style="left:150.8px;top:176.9px" width="6" height="6" viewBox="0 0 6 6"><path d="M0 0.2H4.1L3.4 2.8H0Z" fill="#3f78c9"/><path d="M2.2 3.6H4M3.4 2.4V4.9L4.9 3.6Z" stroke="#5a6f8f" stroke-width="0.6" fill="#5a6f8f"/></svg>
<div style="position:absolute;top:188.10px;height:12px;line-height:12px;font-size:8.8px;color:#8a8a8a;font-weight:400;white-space:nowrap;right:821.70px;text-align:right;transform:scaleX(0.858);transform-origin:right center;">381</div>
<div style="position:absolute;top:188.10px;height:12px;line-height:12px;font-size:7.05px;color:#262626;font-weight:400;white-space:nowrap;left:171.00px;">14%</div>
<div style="position:absolute;top:188.10px;height:12px;line-height:12px;font-size:7.05px;color:#262626;font-weight:400;white-space:nowrap;left:253.60px;">Floating acousic expanded metal ceiling</div>
<div style="position:absolute;top:188.10px;height:12px;line-height:12px;font-size:7.05px;color:#262626;font-weight:400;white-space:nowrap;left:335.60px;width:200px;text-align:center;">12days</div>
<div style="position:absolute;top:188.10px;height:12px;line-height:12px;font-size:7.05px;color:#262626;font-weight:400;white-space:nowrap;left:457.30px;">31-10-23</div>
<div style="position:absolute;top:188.10px;height:12px;line-height:12px;font-size:7.05px;color:#262626;font-weight:400;white-space:nowrap;left:497.00px;">18-01-24</div>
<div style="position:absolute;top:188.10px;height:12px;line-height:12px;font-size:7.05px;color:#262626;font-weight:400;white-space:nowrap;left:536.50px;">Carpenter,Fitter</div>
<svg style="left:121.9px;top:188.6px" width="8" height="9" viewBox="0 0 8 9"><path d="M0.9 1H3.6V2.8M0.9 1V5.2M2.3 3.4H6.1V7H2.3Z" fill="none" stroke="#3a3a3a" stroke-width="0.75"/><rect x="2.3" y="5.9" width="3.8" height="1.1" fill="#333"/></svg>
<svg style="left:150.8px;top:189.8px" width="6" height="6" viewBox="0 0 6 6"><path d="M0 0.2H4.1L3.4 2.8H0Z" fill="#3f78c9"/><path d="M2.2 3.6H4M3.4 2.4V4.9L4.9 3.6Z" stroke="#5a6f8f" stroke-width="0.6" fill="#5a6f8f"/></svg>
<div style="position:absolute;top:200.90px;height:12px;line-height:12px;font-size:8.8px;color:#8a8a8a;font-weight:400;white-space:nowrap;right:821.70px;text-align:right;transform:scaleX(0.858);transform-origin:right center;">382</div>
<div style="position:absolute;top:200.90px;height:12px;line-height:12px;font-size:7.05px;color:#262626;font-weight:400;white-space:nowrap;left:171.00px;">0%</div>
<div style="position:absolute;top:200.90px;height:12px;line-height:12px;font-size:7.05px;color:#262626;font-weight:400;white-space:nowrap;left:253.60px;">Suspended wood wool acoustic raft</div>
<div style="position:absolute;top:200.90px;height:12px;line-height:12px;font-size:7.05px;color:#262626;font-weight:400;white-space:nowrap;left:335.60px;width:200px;text-align:center;">12days</div>
<div style="position:absolute;top:200.90px;height:12px;line-height:12px;font-size:7.05px;color:#262626;font-weight:400;white-space:nowrap;left:457.30px;">18-01-24</div>
<div style="position:absolute;top:200.90px;height:12px;line-height:12px;font-size:7.05px;color:#262626;font-weight:400;white-space:nowrap;left:497.00px;">06-02-24</div>
<div style="position:absolute;top:200.90px;height:12px;line-height:12px;font-size:7.05px;color:#262626;font-weight:400;white-space:nowrap;left:536.50px;">Laborer</div>
<svg style="left:121.9px;top:201.3px" width="8" height="9" viewBox="0 0 8 9"><path d="M0.9 1H3.6V2.8M0.9 1V5.2M2.3 3.4H6.1V7H2.3Z" fill="none" stroke="#3a3a3a" stroke-width="0.75"/><rect x="2.3" y="5.9" width="3.8" height="1.1" fill="#333"/></svg>
<svg style="left:150.8px;top:202.5px" width="6" height="6" viewBox="0 0 6 6"><path d="M0 0.2H4.1L3.4 2.8H0Z" fill="#3f78c9"/><path d="M2.2 3.6H4M3.4 2.4V4.9L4.9 3.6Z" stroke="#5a6f8f" stroke-width="0.6" fill="#5a6f8f"/></svg>
<div style="position:absolute;top:213.70px;height:12px;line-height:12px;font-size:8.8px;color:#8a8a8a;font-weight:400;white-space:nowrap;right:821.70px;text-align:right;transform:scaleX(0.858);transform-origin:right center;">383</div>
<div style="position:absolute;top:213.70px;height:12px;line-height:12px;font-size:7.05px;color:#111;font-weight:700;white-space:nowrap;left:171.00px;">8%</div>
<svg style="left:241.2px;top:217.2px" width="4" height="4"><path d="M3.2 0.2V3.2H0.2z" fill="#444"/></svg>
<div style="position:absolute;top:213.70px;height:12px;line-height:12px;font-size:6.6px;color:#111;font-weight:700;white-space:nowrap;left:248.00px;">Ceiling Installation</div>
<div style="position:absolute;top:213.70px;height:12px;line-height:12px;font-size:7.15px;color:#111;font-weight:700;white-space:nowrap;left:336.30px;width:200px;text-align:center;">34days</div>
<div style="position:absolute;top:213.70px;height:12px;line-height:12px;font-size:6.9px;color:#111;font-weight:700;white-space:nowrap;left:457.30px;">04-11-23</div>
<div style="position:absolute;top:213.70px;height:12px;line-height:12px;font-size:6.9px;color:#111;font-weight:700;white-space:nowrap;left:497.00px;">14-12-23</div>
<div style="position:absolute;top:213.70px;height:12px;line-height:12px;font-size:7.05px;color:#262626;font-weight:400;white-space:nowrap;left:536.50px;"></div>
<svg style="left:121.9px;top:214.2px" width="8" height="9" viewBox="0 0 8 9"><path d="M0.9 1H3.6V2.8M0.9 1V5.2M2.3 3.4H6.1V7H2.3Z" fill="none" stroke="#3a3a3a" stroke-width="0.75"/><rect x="2.3" y="5.9" width="3.8" height="1.1" fill="#333"/></svg>
<svg style="left:150.8px;top:215.3px" width="6" height="6" viewBox="0 0 6 6"><path d="M0 0.2H4.1L3.4 2.8H0Z" fill="#3f78c9"/><path d="M2.2 3.6H4M3.4 2.4V4.9L4.9 3.6Z" stroke="#5a6f8f" stroke-width="0.6" fill="#5a6f8f"/></svg>
<div style="position:absolute;top:226.50px;height:12px;line-height:12px;font-size:8.8px;color:#8a8a8a;font-weight:400;white-space:nowrap;right:821.70px;text-align:right;transform:scaleX(0.858);transform-origin:right center;">384</div>
<div style="position:absolute;top:226.50px;height:12px;line-height:12px;font-size:7.05px;color:#c5262d;font-weight:400;white-space:nowrap;left:171.00px;">0%</div>
<div style="position:absolute;top:226.50px;height:12px;line-height:12px;font-size:7.05px;color:#c5262d;font-weight:400;white-space:nowrap;left:255.00px;">Moisture resistant plasterboard ceiling</div>
<div style="position:absolute;top:226.50px;height:12px;line-height:12px;font-size:7.05px;color:#c5262d;font-weight:400;white-space:nowrap;left:335.60px;width:200px;text-align:center;">4days</div>
<div style="position:absolute;top:226.50px;height:12px;line-height:12px;font-size:7.05px;color:#c5262d;font-weight:400;white-space:nowrap;left:457.30px;">04-11-23</div>
<div style="position:absolute;top:226.50px;height:12px;line-height:12px;font-size:7.05px;color:#262626;font-weight:400;white-space:nowrap;left:497.00px;">13-11-23</div>
<div style="position:absolute;top:226.50px;height:12px;line-height:12px;font-size:7.05px;color:#c5262d;font-weight:400;white-space:nowrap;left:536.50px;">Fitter</div>
<svg style="left:121.9px;top:227.0px" width="8" height="9" viewBox="0 0 8 9"><path d="M0.9 1H3.6V2.8M0.9 1V5.2M2.3 3.4H6.1V7H2.3Z" fill="none" stroke="#3a3a3a" stroke-width="0.75"/><rect x="2.3" y="5.9" width="3.8" height="1.1" fill="#333"/></svg>
<svg style="left:150.8px;top:228.2px" width="6" height="6" viewBox="0 0 6 6"><path d="M0 0.2H4.1L3.4 2.8H0Z" fill="#3f78c9"/><path d="M2.2 3.6H4M3.4 2.4V4.9L4.9 3.6Z" stroke="#5a6f8f" stroke-width="0.6" fill="#5a6f8f"/></svg>
<div style="position:absolute;top:239.30px;height:12px;line-height:12px;font-size:8.8px;color:#8a8a8a;font-weight:400;white-space:nowrap;right:821.70px;text-align:right;transform:scaleX(0.858);transform-origin:right center;">385</div>
<div style="position:absolute;top:239.30px;height:12px;line-height:12px;font-size:7.05px;color:#c5262d;font-weight:400;white-space:nowrap;left:171.00px;">25%</div>
<div style="position:absolute;top:239.30px;height:12px;line-height:12px;font-size:7.05px;color:#c5262d;font-weight:400;white-space:nowrap;left:255.00px;">Expanded metal ceiling</div>
<div style="position:absolute;top:239.30px;height:12px;line-height:12px;font-size:7.05px;color:#c5262d;font-weight:400;white-space:nowrap;left:335.60px;width:200px;text-align:center;">4days</div>
<div style="position:absolute;top:239.30px;height:12px;line-height:12px;font-size:7.05px;color:#c5262d;font-weight:400;white-space:nowrap;left:457.30px;">10-11-23</div>
<div style="position:absolute;top:239.30px;height:12px;line-height:12px;font-size:7.05px;color:#262626;font-weight:400;white-space:nowrap;left:497.00px;">17-11-23</div>
<div style="position:absolute;top:239.30px;height:12px;line-height:12px;font-size:7.05px;color:#c5262d;font-weight:400;white-space:nowrap;left:536.50px;">Fitter</div>
<svg style="left:121.9px;top:239.8px" width="8" height="9" viewBox="0 0 8 9"><path d="M0.9 1H3.6V2.8M0.9 1V5.2M2.3 3.4H6.1V7H2.3Z" fill="none" stroke="#3a3a3a" stroke-width="0.75"/><rect x="2.3" y="5.9" width="3.8" height="1.1" fill="#333"/></svg>
<svg style="left:150.8px;top:240.9px" width="6" height="6" viewBox="0 0 6 6"><path d="M0 0.2H4.1L3.4 2.8H0Z" fill="#3f78c9"/><path d="M2.2 3.6H4M3.4 2.4V4.9L4.9 3.6Z" stroke="#5a6f8f" stroke-width="0.6" fill="#5a6f8f"/></svg>
<div style="position:absolute;top:252.10px;height:12px;line-height:12px;font-size:8.8px;color:#8a8a8a;font-weight:400;white-space:nowrap;right:821.70px;text-align:right;transform:scaleX(0.858);transform-origin:right center;">386</div>
<div style="position:absolute;top:252.10px;height:12px;line-height:12px;font-size:7.05px;color:#c5262d;font-weight:400;white-space:nowrap;left:171.00px;">25%</div>
<div style="position:absolute;top:252.10px;height:12px;line-height:12px;font-size:7.05px;color:#c5262d;font-weight:400;white-space:nowrap;left:255.00px;">Acoustic expanded metal ceiling with upstand</div>
<div style="position:absolute;top:252.10px;height:12px;line-height:12px;font-size:7.05px;color:#c5262d;font-weight:400;white-space:nowrap;left:335.60px;width:200px;text-align:center;">4days</div>
<div style="position:absolute;top:252.10px;height:12px;line-height:12px;font-size:7.05px;color:#c5262d;font-weight:400;white-space:nowrap;left:457.30px;">15-11-23</div>
<div style="position:absolute;top:252.10px;height:12px;line-height:12px;font-size:7.05px;color:#262626;font-weight:400;white-space:nowrap;left:497.00px;">29-11-23</div>
<div style="position:absolute;top:252.10px;height:12px;line-height:12px;font-size:7.05px;color:#c5262d;font-weight:400;white-space:nowrap;left:536.50px;">Fitter</div>
<svg style="left:121.9px;top:252.6px" width="8" height="9" viewBox="0 0 8 9"><path d="M0.9 1H3.6V2.8M0.9 1V5.2M2.3 3.4H6.1V7H2.3Z" fill="none" stroke="#3a3a3a" stroke-width="0.75"/><rect x="2.3" y="5.9" width="3.8" height="1.1" fill="#333"/></svg>
<svg style="left:150.8px;top:253.8px" width="6" height="6" viewBox="0 0 6 6"><path d="M0 0.2H4.1L3.4 2.8H0Z" fill="#3f78c9"/><path d="M2.2 3.6H4M3.4 2.4V4.9L4.9 3.6Z" stroke="#5a6f8f" stroke-width="0.6" fill="#5a6f8f"/></svg>
<div style="position:absolute;top:264.90px;height:12px;line-height:12px;font-size:8.8px;color:#8a8a8a;font-weight:400;white-space:nowrap;right:821.70px;text-align:right;transform:scaleX(0.858);transform-origin:right center;">387</div>
<div style="position:absolute;top:264.90px;height:12px;line-height:12px;font-size:7.05px;color:#c5262d;font-weight:400;white-space:nowrap;left:171.00px;">0%</div>
<div style="position:absolute;top:264.90px;height:12px;line-height:12px;font-size:7.05px;color:#c5262d;font-weight:400;white-space:nowrap;left:255.00px;">Floating acousic expanded metal ceiling</div>
<div style="position:absolute;top:264.90px;height:12px;line-height:12px;font-size:7.05px;color:#262626;font-weight:400;white-space:nowrap;left:335.60px;width:200px;text-align:center;">6days</div>
<div style="position:absolute;top:264.90px;height:12px;line-height:12px;font-size:7.05px;color:#262626;font-weight:400;white-space:nowrap;left:457.30px;">29-11-23</div>
<div style="position:absolute;top:264.90px;height:12px;line-height:12px;font-size:7.05px;color:#262626;font-weight:400;white-space:nowrap;left:497.00px;">06-12-23</div>
<div style="position:absolute;top:264.90px;height:12px;line-height:12px;font-size:7.05px;color:#c5262d;font-weight:400;white-space:nowrap;left:536.50px;">Carpenter,Drilling Machine</div>
<svg style="left:121.9px;top:265.4px" width="8" height="9" viewBox="0 0 8 9"><path d="M0.9 1H3.6V2.8M0.9 1V5.2M2.3 3.4H6.1V7H2.3Z" fill="none" stroke="#3a3a3a" stroke-width="0.75"/><rect x="2.3" y="5.9" width="3.8" height="1.1" fill="#333"/></svg>
<svg style="left:150.8px;top:266.6px" width="6" height="6" viewBox="0 0 6 6"><path d="M0 0.2H4.1L3.4 2.8H0Z" fill="#3f78c9"/><path d="M2.2 3.6H4M3.4 2.4V4.9L4.9 3.6Z" stroke="#5a6f8f" stroke-width="0.6" fill="#5a6f8f"/></svg>
<div style="position:absolute;top:277.70px;height:12px;line-height:12px;font-size:8.8px;color:#8a8a8a;font-weight:400;white-space:nowrap;right:821.70px;text-align:right;transform:scaleX(0.858);transform-origin:right center;">388</div>
<div style="position:absolute;top:277.70px;height:12px;line-height:12px;font-size:7.05px;color:#c5262d;font-weight:400;white-space:nowrap;left:171.00px;">0%</div>
<div style="position:absolute;top:277.70px;height:12px;line-height:12px;font-size:7.05px;color:#c5262d;font-weight:400;white-space:nowrap;left:255.00px;">Suspended wood wool acoustic raft</div>
<div style="position:absolute;top:277.70px;height:12px;line-height:12px;font-size:7.05px;color:#c5262d;font-weight:400;white-space:nowrap;left:335.60px;width:200px;text-align:center;">6days</div>
<div style="position:absolute;top:277.70px;height:12px;line-height:12px;font-size:7.05px;color:#262626;font-weight:400;white-space:nowrap;left:457.30px;">07-12-23</div>
<div style="position:absolute;top:277.70px;height:12px;line-height:12px;font-size:7.05px;color:#262626;font-weight:400;white-space:nowrap;left:497.00px;">14-12-23</div>
<div style="position:absolute;top:277.70px;height:12px;line-height:12px;font-size:7.05px;color:#c5262d;font-weight:400;white-space:nowrap;left:536.50px;">Carpenter</div>
<svg style="left:121.9px;top:278.1px" width="8" height="9" viewBox="0 0 8 9"><path d="M0.9 1H3.6V2.8M0.9 1V5.2M2.3 3.4H6.1V7H2.3Z" fill="none" stroke="#3a3a3a" stroke-width="0.75"/><rect x="2.3" y="5.9" width="3.8" height="1.1" fill="#333"/></svg>
<svg style="left:150.8px;top:279.3px" width="6" height="6" viewBox="0 0 6 6"><path d="M0 0.2H4.1L3.4 2.8H0Z" fill="#3f78c9"/><path d="M2.2 3.6H4M3.4 2.4V4.9L4.9 3.6Z" stroke="#5a6f8f" stroke-width="0.6" fill="#5a6f8f"/></svg>
<div style="position:absolute;top:290.50px;height:12px;line-height:12px;font-size:8.8px;color:#8a8a8a;font-weight:400;white-space:nowrap;right:821.70px;text-align:right;transform:scaleX(0.858);transform-origin:right center;">389</div>
<div style="position:absolute;top:290.50px;height:12px;line-height:12px;font-size:7.05px;color:#111;font-weight:700;white-space:nowrap;left:171.00px;">9%</div>
<svg style="left:233.4px;top:294.0px" width="4" height="4"><path d="M3.2 0.2V3.2H0.2z" fill="#444"/></svg>
<div style="position:absolute;top:290.50px;height:12px;line-height:12px;font-size:6.6px;color:#111;font-weight:700;white-space:nowrap;left:240.20px;">Painting works</div>
<div style="position:absolute;top:290.50px;height:12px;line-height:12px;font-size:7.15px;color:#111;font-weight:700;white-space:nowrap;left:336.30px;width:200px;text-align:center;">57days</div>
<div style="position:absolute;top:290.50px;height:12px;line-height:12px;font-size:6.9px;color:#111;font-weight:700;white-space:nowrap;left:457.30px;">09-12-23</div>
<div style="position:absolute;top:290.50px;height:12px;line-height:12px;font-size:6.9px;color:#111;font-weight:700;white-space:nowrap;left:497.00px;">20-02-24</div>
<div style="position:absolute;top:290.50px;height:12px;line-height:12px;font-size:7.05px;color:#262626;font-weight:400;white-space:nowrap;left:536.50px;"></div>
<svg style="left:121.9px;top:290.9px" width="8" height="9" viewBox="0 0 8 9"><path d="M0.9 1H3.6V2.8M0.9 1V5.2M2.3 3.4H6.1V7H2.3Z" fill="none" stroke="#3a3a3a" stroke-width="0.75"/><rect x="2.3" y="5.9" width="3.8" height="1.1" fill="#333"/></svg>
<svg style="left:150.8px;top:292.1px" width="6" height="6" viewBox="0 0 6 6"><path d="M0 0.2H4.1L3.4 2.8H0Z" fill="#3f78c9"/><path d="M2.2 3.6H4M3.4 2.4V4.9L4.9 3.6Z" stroke="#5a6f8f" stroke-width="0.6" fill="#5a6f8f"/></svg>
<div style="position:absolute;top:303.30px;height:12px;line-height:12px;font-size:8.8px;color:#8a8a8a;font-weight:400;white-space:nowrap;right:821.70px;text-align:right;transform:scaleX(0.858);transform-origin:right center;">390</div>
<div style="position:absolute;top:303.30px;height:12px;line-height:12px;font-size:7.05px;color:#262626;font-weight:400;white-space:nowrap;left:171.00px;">25%</div>
<div style="position:absolute;top:303.30px;height:12px;line-height:12px;font-size:7.05px;color:#262626;font-weight:400;white-space:nowrap;left:246.50px;">Primer & Putty application on walls and partitions</div>
<div style="position:absolute;top:303.30px;height:12px;line-height:12px;font-size:7.05px;color:#262626;font-weight:400;white-space:nowrap;left:335.60px;width:200px;text-align:center;">3days</div>
<div style="position:absolute;top:303.30px;height:12px;line-height:12px;font-size:7.05px;color:#262626;font-weight:400;white-space:nowrap;left:457.30px;">09-12-23</div>
<div style="position:absolute;top:303.30px;height:12px;line-height:12px;font-size:7.05px;color:#262626;font-weight:400;white-space:nowrap;left:497.00px;">16-02-24</div>
<div style="position:absolute;top:303.30px;height:12px;line-height:12px;font-size:7.05px;color:#262626;font-weight:400;white-space:nowrap;left:536.50px;">Painter,POP Installer</div>
<svg style="left:121.9px;top:303.8px" width="8" height="9" viewBox="0 0 8 9"><path d="M0.9 1H3.6V2.8M0.9 1V5.2M2.3 3.4H6.1V7H2.3Z" fill="none" stroke="#3a3a3a" stroke-width="0.75"/><rect x="2.3" y="5.9" width="3.8" height="1.1" fill="#333"/></svg>
<svg style="left:150.8px;top:304.9px" width="6" height="6" viewBox="0 0 6 6"><path d="M0 0.2H4.1L3.4 2.8H0Z" fill="#3f78c9"/><path d="M2.2 3.6H4M3.4 2.4V4.9L4.9 3.6Z" stroke="#5a6f8f" stroke-width="0.6" fill="#5a6f8f"/></svg>
<div style="position:absolute;top:316.10px;height:12px;line-height:12px;font-size:9.2px;color:#2f7d45;font-weight:700;white-space:nowrap;right:821.60px;text-align:right;transform:scaleX(0.847);transform-origin:right center;">391</div>
<div style="position:absolute;top:316.10px;height:12px;line-height:12px;font-size:7.05px;color:#262626;font-weight:400;white-space:nowrap;left:171.00px;">0%</div>
<div style="position:absolute;top:316.10px;height:12px;line-height:12px;font-size:7.05px;color:#262626;font-weight:400;white-space:nowrap;left:246.50px;">1st coat painting</div>
<div style="position:absolute;top:316.10px;height:12px;line-height:12px;font-size:7.05px;color:#262626;font-weight:400;white-space:nowrap;left:335.60px;width:200px;text-align:center;">3days</div>
<div style="position:absolute;top:316.10px;height:12px;line-height:12px;font-size:7.05px;color:#262626;font-weight:400;white-space:nowrap;left:457.30px;">16-02-24</div>
<div style="position:absolute;top:316.10px;height:12px;line-height:12px;font-size:7.05px;color:#262626;font-weight:400;white-space:nowrap;left:497.00px;">20-02-24</div>
<div style="position:absolute;top:316.10px;height:12px;line-height:12px;font-size:7.05px;color:#262626;font-weight:400;white-space:nowrap;left:536.50px;">Painter,POP Installer</div>
<svg style="left:121.9px;top:316.5px" width="8" height="9" viewBox="0 0 8 9"><path d="M0.9 1H3.6V2.8M0.9 1V5.2M2.3 3.4H6.1V7H2.3Z" fill="none" stroke="#3a3a3a" stroke-width="0.75"/><rect x="2.3" y="5.9" width="3.8" height="1.1" fill="#333"/></svg>
<svg style="left:150.8px;top:317.7px" width="6" height="6" viewBox="0 0 6 6"><path d="M0 0.2H4.1L3.4 2.8H0Z" fill="#3f78c9"/><path d="M2.2 3.6H4M3.4 2.4V4.9L4.9 3.6Z" stroke="#5a6f8f" stroke-width="0.6" fill="#5a6f8f"/></svg>
<div style="position:absolute;left:119.90px;top:86.30px;width:30.40px;height:242.60px;background:transparent;border:2.5px solid #e3161f;border-radius:2px;"></div>
<div style="position:absolute;left:663px;top:86.8px;width:40px;height:12px;overflow:hidden;"><div style="position:absolute;left:-2.6px;top:0;line-height:12px;font-size:8.3px;color:#707070;white-space:nowrap;">ptember</div></div>
<div style="position:absolute;top:86.80px;height:12px;line-height:12px;font-size:8.1px;color:#707070;font-weight:400;white-space:nowrap;left:798.60px;">October</div>
<div style="position:absolute;left:795.40px;top:85.50px;width:1.00px;height:12.00px;background:#e9e9e9;"></div>
<div style="position:absolute;top:97.90px;height:12px;line-height:12px;font-size:7.8px;color:#707070;font-weight:400;white-space:nowrap;left:580.00px;width:200px;text-align:center;">04-09</div>
<div style="position:absolute;top:97.90px;height:12px;line-height:12px;font-size:7.8px;color:#707070;font-weight:400;white-space:nowrap;left:614.20px;width:200px;text-align:center;">11-09</div>
<div style="position:absolute;left:697.10px;top:99.00px;width:1.00px;height:10.50px;background:#e8e8e8;"></div>
<div style="position:absolute;top:97.90px;height:12px;line-height:12px;font-size:7.8px;color:#707070;font-weight:400;white-space:nowrap;left:648.40px;width:200px;text-align:center;">18-09</div>
<div style="position:absolute;left:731.30px;top:99.00px;width:1.00px;height:10.50px;background:#e8e8e8;"></div>
<div style="position:absolute;top:97.90px;height:12px;line-height:12px;font-size:7.8px;color:#707070;font-weight:400;white-space:nowrap;left:682.60px;width:200px;text-align:center;">25-09</div>
<div style="position:absolute;left:765.50px;top:99.00px;width:1.00px;height:10.50px;background:#e8e8e8;"></div>
<div style="position:absolute;top:97.90px;height:12px;line-height:12px;font-size:7.8px;color:#707070;font-weight:400;white-space:nowrap;left:716.80px;width:200px;text-align:center;">02-10</div>
<div style="position:absolute;left:799.70px;top:99.00px;width:1.00px;height:10.50px;background:#e8e8e8;"></div>
<div style="position:absolute;top:97.90px;height:12px;line-height:12px;font-size:7.8px;color:#707070;font-weight:400;white-space:nowrap;left:751.00px;width:200px;text-align:center;">09-10</div>
<div style="position:absolute;left:833.90px;top:99.00px;width:1.00px;height:10.50px;background:#e8e8e8;"></div>
<div style="position:absolute;top:97.90px;height:12px;line-height:12px;font-size:7.8px;color:#707070;font-weight:400;white-space:nowrap;left:785.20px;width:200px;text-align:center;">16-10</div>
<div style="position:absolute;left:868.10px;top:99.00px;width:1.00px;height:10.50px;background:#e8e8e8;"></div>
<div style="position:absolute;top:97.90px;height:12px;line-height:12px;font-size:7.8px;color:#707070;font-weight:400;white-space:nowrap;left:819.40px;width:200px;text-align:center;">23-10</div>
<div style="position:absolute;left:902.30px;top:99.00px;width:1.00px;height:10.50px;background:#e8e8e8;"></div>
<div style="position:absolute;left:663.00px;top:110.80px;width:273.00px;height:1.00px;background:#c9c9c9;"></div>
<svg style="left:0;top:0" width="936" height="340" viewBox="0 0 936 340"><rect x="673.8" y="111.5" width="5.30" height="217.6" fill="#d6e6f9"/><rect x="673.8" y="111.5" width="1.3" height="217.6" fill="#a4c5ec"/><rect x="677.80" y="111.5" width="1.3" height="217.6" fill="#a4c5ec"/><rect x="717.6" y="111.5" width="4.40" height="217.6" fill="#cfe1f7"/><rect x="717.6" y="111.5" width="1.3" height="217.6" fill="#a4c5ec"/><rect x="720.70" y="111.5" width="1.3" height="217.6" fill="#a4c5ec"/><rect x="749.0" y="111.5" width="2.00" height="217.6" fill="#b4d0f1"/><rect x="844.9" y="111.5" width="2.10" height="217.6" fill="#c0d8f4"/><rect x="879.0" y="111.5" width="2.00" height="217.6" fill="#c0d8f4"/><rect x="885.9" y="111.5" width="2.10" height="217.6" fill="#a8c8ee"/><rect x="894.0" y="111.5" width="1.20" height="217.6" fill="#a4c5ec"/><rect x="915.0" y="111.5" width="2.00" height="217.6" fill="#b0cdf0"/></svg>
<svg style="left:0;top:0" width="936" height="340" viewBox="0 0 936 340">
<g fill="none" stroke="#3c3c3c" stroke-width="1.1">
<path d="M787 132.4V128.4H936"/><path d="M787 145.6V141.6H936"/>
</g>
<path d="M663 158.3H786" stroke="#8db6e6" stroke-width="0.9" fill="none"/>
<path d="M784.2 156.6L787 158.3L784.2 160z" fill="#3f78c9"/>
<rect x="787" y="154.2" width="42.5" height="4" fill="#8bb5ea"/>
<rect x="787" y="155" width="25.5" height="2.4" fill="#3f7fd6"/>
<path d="M829 158.6H936M835.8 158.6V169" stroke="#4a86d6" stroke-width="0.9" fill="none"/>
<path d="M833.6 167.4H838L835.8 170.3z" fill="#3f78c9"/>
<rect x="836.5" y="166.6" width="71" height="4.4" fill="#8bb5ea"/>
<rect x="836.5" y="167.6" width="7" height="2.2" fill="#3f7fd6"/>
<path d="M908 170.4H936" stroke="#b8d0ee" stroke-width="0.9" stroke-dasharray="1.2 1.2" fill="none"/>
<rect x="924.3" y="166.6" width="3.2" height="4.4" fill="#8bb5ea"/>
<path d="M936 175.6H880.7V183.4H883" stroke="#4a86d6" stroke-width="0.9" fill="none"/>
<path d="M882.6 181.6L885.4 183.4L882.6 185.2z" fill="#3f78c9"/>
<rect x="885.4" y="179.6" width="10.4" height="3.8" fill="#4a8ae0"/>
<path d="M896 183.2H936" stroke="#b8d0ee" stroke-width="0.9" stroke-dasharray="1.2 1.2" fill="none"/>
</svg>
<div style="position:absolute;top:149.30px;height:12px;line-height:12px;font-size:7.55px;color:#111;font-weight:700;white-space:nowrap;left:833.30px;">Barbender,Carpenter,Joiner</div>
<div style="position:absolute;left:84.00px;top:340.60px;width:852.00px;height:2.00px;background:#e6e6e6;"></div>
<div style="position:absolute;left:660.40px;top:342.00px;width:2.80px;height:248.00px;background:#ebebeb;"></div>
<div style="position:absolute;left:663px;top:343.5px;width:40px;height:12px;overflow:hidden;"><div style="position:absolute;left:-2.6px;top:0;line-height:12px;font-size:8.3px;color:#707070;white-space:nowrap;">ptember</div></div>
<div style="position:absolute;top:343.50px;height:12px;line-height:12px;font-size:8.1px;color:#707070;font-weight:400;white-space:nowrap;left:798.60px;">October</div>
<div style="position:absolute;left:795.40px;top:343.50px;width:1.00px;height:12.00px;background:#e9e9e9;"></div>
<div style="position:absolute;top:354.60px;height:12px;line-height:12px;font-size:7.8px;color:#707070;font-weight:400;white-space:nowrap;left:580.00px;width:200px;text-align:center;">04-09</div>
<div style="position:absolute;top:354.60px;height:12px;line-height:12px;font-size:7.8px;color:#707070;font-weight:400;white-space:nowrap;left:614.20px;width:200px;text-align:center;">11-09</div>
<div style="position:absolute;left:697.10px;top:357.00px;width:1.00px;height:10.50px;background:#e8e8e8;"></div>
<div style="position:absolute;top:354.60px;height:12px;line-height:12px;font-size:7.8px;color:#707070;font-weight:400;white-space:nowrap;left:648.40px;width:200px;text-align:center;">18-09</div>
<div style="position:absolute;left:731.30px;top:357.00px;width:1.00px;height:10.50px;background:#e8e8e8;"></div>
<div style="position:absolute;top:354.60px;height:12px;line-height:12px;font-size:7.8px;color:#707070;font-weight:400;white-space:nowrap;left:682.60px;width:200px;text-align:center;">25-09</div>
<div style="position:absolute;left:765.50px;top:357.00px;width:1.00px;height:10.50px;background:#e8e8e8;"></div>
<div style="position:absolute;top:354.60px;height:12px;line-height:12px;font-size:7.8px;color:#707070;font-weight:400;white-space:nowrap;left:716.80px;width:200px;text-align:center;">02-10</div>
<div style="position:absolute;left:799.70px;top:357.00px;width:1.00px;height:10.50px;background:#e8e8e8;"></div>
<div style="position:absolute;top:354.60px;height:12px;line-height:12px;font-size:7.8px;color:#707070;font-weight:400;white-space:nowrap;left:751.00px;width:200px;text-align:center;">09-10</div>
<div style="position:absolute;left:833.90px;top:357.00px;width:1.00px;height:10.50px;background:#e8e8e8;"></div>
<div style="position:absolute;top:354.60px;height:12px;line-height:12px;font-size:7.8px;color:#707070;font-weight:400;white-space:nowrap;left:785.20px;width:200px;text-align:center;">16-10</div>
<div style="position:absolute;left:868.10px;top:357.00px;width:1.00px;height:10.50px;background:#e8e8e8;"></div>
<div style="position:absolute;top:354.60px;height:12px;line-height:12px;font-size:7.8px;color:#707070;font-weight:400;white-space:nowrap;left:819.40px;width:200px;text-align:center;">23-10</div>
<div style="position:absolute;left:902.30px;top:357.00px;width:1.00px;height:10.50px;background:#e8e8e8;"></div>
<div style="position:absolute;left:663.00px;top:409.90px;width:273.00px;height:1.00px;background:#f1f1f1;"></div>
<div style="position:absolute;left:663.00px;top:451.00px;width:273.00px;height:1.00px;background:#f1f1f1;"></div>
<div style="position:absolute;left:663.00px;top:492.10px;width:273.00px;height:1.00px;background:#f1f1f1;"></div>
<div style="position:absolute;left:663.00px;top:533.20px;width:273.00px;height:1.00px;background:#f1f1f1;"></div>
<div style="position:absolute;left:663.00px;top:368.50px;width:273.00px;height:1.50px;background:#444444;"></div>
<svg style="left:0;top:0" width="936" height="590" viewBox="0 0 936 590"><rect x="664.25" y="368.80" width="31.9" height="205.50" fill="#528bd1"/><rect x="698.45" y="471.55" width="31.9" height="102.75" fill="#528bd1"/><rect x="732.65" y="471.55" width="31.9" height="102.75" fill="#528bd1"/><rect x="766.85" y="471.55" width="31.9" height="102.75" fill="#528bd1"/><rect x="835.25" y="368.80" width="31.9" height="205.50" fill="#528bd1"/><rect x="869.45" y="368.80" width="31.9" height="205.50" fill="#528bd1"/></svg>
<div style="position:absolute;left:663.00px;top:574.00px;width:273.00px;height:1.30px;background:#9a9a9a;"></div>
<div style="position:absolute;left:662.90px;top:574.30px;width:1.10px;height:12.50px;background:#8c8c8c;"></div>
<div style="position:absolute;left:697.10px;top:574.30px;width:1.10px;height:12.50px;background:#8c8c8c;"></div>
<div style="position:absolute;left:731.30px;top:574.30px;width:1.10px;height:12.50px;background:#8c8c8c;"></div>
<div style="position:absolute;left:765.50px;top:574.30px;width:1.10px;height:12.50px;background:#8c8c8c;"></div>
<div style="position:absolute;left:799.70px;top:574.30px;width:1.10px;height:12.50px;background:#8c8c8c;"></div>
<div style="position:absolute;left:833.90px;top:574.30px;width:1.10px;height:12.50px;background:#8c8c8c;"></div>
<div style="position:absolute;left:868.10px;top:574.30px;width:1.10px;height:12.50px;background:#8c8c8c;"></div>
<div style="position:absolute;left:902.30px;top:574.30px;width:1.10px;height:12.50px;background:#8c8c8c;"></div>
<div style="position:absolute;top:575.60px;height:12px;line-height:12px;font-size:7.8px;color:#222;font-weight:400;white-space:nowrap;left:580.40px;width:200px;text-align:center;">100%</div>
<div style="position:absolute;top:575.60px;height:12px;line-height:12px;font-size:7.8px;color:#222;font-weight:400;white-space:nowrap;left:614.60px;width:200px;text-align:center;">50%</div>
<div style="position:absolute;top:575.60px;height:12px;line-height:12px;font-size:7.8px;color:#222;font-weight:400;white-space:nowrap;left:648.80px;width:200px;text-align:center;">50%</div>
<div style="position:absolute;top:575.60px;height:12px;line-height:12px;font-size:7.8px;color:#222;font-weight:400;white-space:nowrap;left:683.00px;width:200px;text-align:center;">50%</div>
<div style="position:absolute;top:575.60px;height:12px;line-height:12px;font-size:7.8px;color:#222;font-weight:400;white-space:nowrap;left:751.40px;width:200px;text-align:center;">100%</div>
<div style="position:absolute;top:575.60px;height:12px;line-height:12px;font-size:7.8px;color:#222;font-weight:400;white-space:nowrap;left:785.60px;width:200px;text-align:center;">100%</div>
<div style="position:absolute;top:575.60px;height:12px;line-height:12px;font-size:7.8px;color:#222;font-weight:400;white-space:nowrap;right:276.00px;text-align:right;">Peak Units:</div>
<div style="position:absolute;top:362.60px;height:12px;line-height:12px;font-size:8.3px;color:#222;font-weight:400;white-space:nowrap;right:279.20px;text-align:right;">100%</div>
<div style="position:absolute;left:658.60px;top:369.40px;width:1.30px;height:1.00px;background:#666;"></div>
<div style="position:absolute;top:403.70px;height:12px;line-height:12px;font-size:8.3px;color:#222;font-weight:400;white-space:nowrap;right:279.20px;text-align:right;">80%</div>
<div style="position:absolute;left:658.60px;top:410.50px;width:1.30px;height:1.00px;background:#666;"></div>
<div style="position:absolute;top:444.80px;height:12px;line-height:12px;font-size:8.3px;color:#222;font-weight:400;white-space:nowrap;right:279.20px;text-align:right;">60%</div>
<div style="position:absolute;left:658.60px;top:451.60px;width:1.30px;height:1.00px;background:#666;"></div>
<div style="position:absolute;top:485.90px;height:12px;line-height:12px;font-size:8.3px;color:#222;font-weight:400;white-space:nowrap;right:279.20px;text-align:right;">40%</div>
<div style="position:absolute;left:658.60px;top:492.70px;width:1.30px;height:1.00px;background:#666;"></div>
<div style="position:absolute;top:527.00px;height:12px;line-height:12px;font-size:8.3px;color:#222;font-weight:400;white-space:nowrap;right:279.20px;text-align:right;">20%</div>
<div style="position:absolute;left:658.60px;top:533.80px;width:1.30px;height:1.00px;background:#666;"></div>
<div style="position:absolute;left:95.00px;top:586.20px;width:566.00px;height:4.00px;background:#ececec;"></div>
<div style="position:absolute;left:95.30px;top:585.80px;width:9.50px;height:5.00px;background:#fdfdfd;border:1px solid #d2d2d2;"></div>
<div style="position:absolute;left:377.80px;top:585.70px;width:272.00px;height:5.00px;background:#ffffff;border:1px solid #cdcdcd;"></div>
<div style="position:absolute;left:650.00px;top:586.00px;width:11.00px;height:4.00px;background:#f4f4f4;"></div>
<div style="position:absolute;left:663.50px;top:587.30px;width:273.00px;height:3.00px;background:#ececec;"></div>
<div style="position:absolute;left:663.80px;top:587.00px;width:8.00px;height:4.00px;background:#fbfbfb;border:1px solid #d6d6d6;"></div>
<div style="position:absolute;left:314.80px;top:423.60px;width:102.40px;height:75.20px;background:#1a1a1a;"></div>
<div style="position:absolute;left:313.30px;top:421.90px;width:102.60px;height:75.50px;background:#fff;border:1px solid #1a1a1a;"></div>
<div style="position:absolute;top:428.60px;height:12px;line-height:12px;font-size:9.0px;color:#222;font-weight:400;white-space:nowrap;left:324.00px;">POP Installer</div>
<div style="position:absolute;top:442.30px;height:12px;line-height:12px;font-size:8.3px;color:#222;font-weight:400;white-space:nowrap;left:329.00px;">Overallocated:</div>
<div style="position:absolute;left:387.30px;top:441.20px;width:24.00px;height:11.60px;background:#cf4d54;"></div>
<div style="position:absolute;top:460.20px;height:12px;line-height:12px;font-size:8.3px;color:#222;font-weight:400;white-space:nowrap;left:329.00px;">Allocated:</div>
<div style="position:absolute;left:387.30px;top:459.10px;width:24.00px;height:11.60px;background:#528bd1;"></div>
<div style="position:absolute;top:478.20px;height:12px;line-height:12px;font-size:8.3px;color:#222;font-weight:400;white-space:nowrap;left:329.00px;">Proposed:</div>
<div style="position:absolute;left:387.30px;top:477.10px;width:24.00px;height:11.60px;background:#7f60a9;"></div>
</body></html>
